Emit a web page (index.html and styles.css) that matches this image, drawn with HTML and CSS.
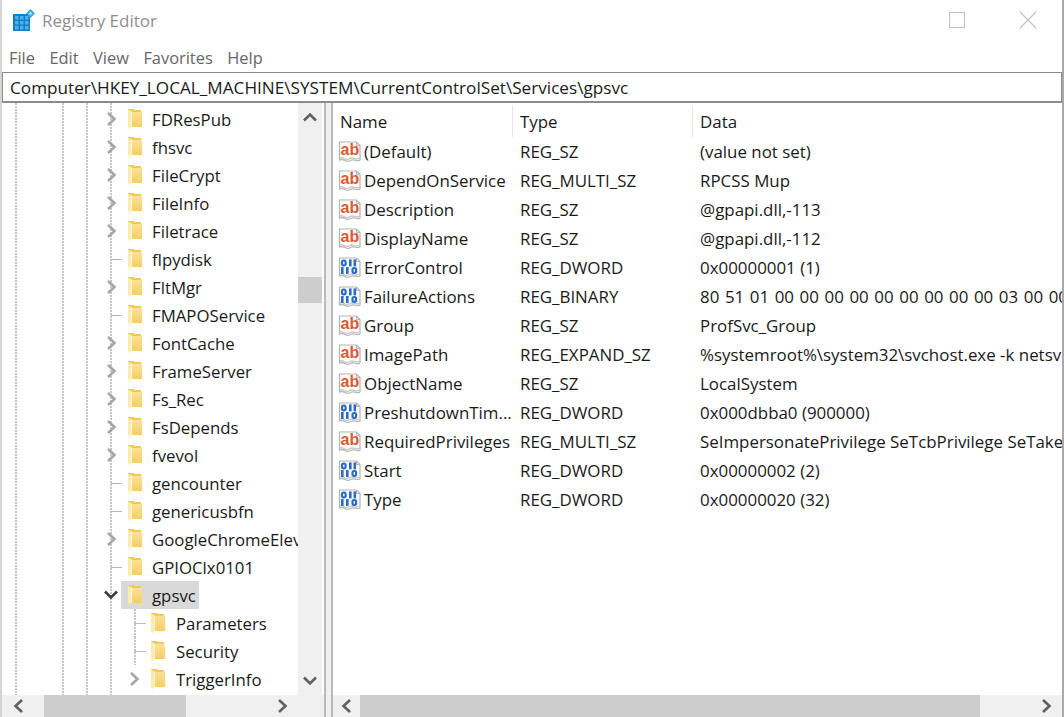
FILE: index.html
```html
<!doctype html>
<html>
    <head>
        <meta charset="utf-8">
        <title>Registry Editor</title>
        <link rel="stylesheet" href="styles.css">
    </head>
    <body>
        <svg class="defs" width="0" height="0">
            <defs>
                <linearGradient id="folder-body" x1="0" y1="0" x2="0" y2="1">
                    <stop offset="0" stop-color="#fbe296"/>
                    <stop offset="1" stop-color="#f6cd68"/>
                </linearGradient>
            </defs>
            <symbol id="folder" viewBox="0 0 16 22">
                <path d="M1 1h6l1 1h6v3H1z" fill="#efc863"/>
                <path d="M5 4h10v15H5z" fill="url(#folder-body)"/>
                <path d="M1 1.500 5 4v15H3.500v2.500L1 19z" fill="#fdeaae"/>
                <path d="M4.500 3.500V19" stroke="#fff6d8" stroke-width="1"/>
            </symbol>
            <symbol id="right" viewBox="0 0 12 14">
                <path d="M2 1 8.500 7 2 13" fill="none" stroke="currentColor" stroke-width="2.600"/>
            </symbol>
            <symbol id="down" viewBox="0 0 14 12">
                <path d="M1 2.500 7 8.500l6-6" fill="none" stroke="currentColor" stroke-width="2.600"/>
            </symbol>
            <symbol id="left" viewBox="0 0 12 14">
                <path d="M10 1 3.500 7l6.500 6" fill="none" stroke="currentColor" stroke-width="2.600"/>
            </symbol>
            <symbol id="up" viewBox="0 0 14 12">
                <path d="M1 9.500 7 3.500l6 6" fill="none" stroke="currentColor" stroke-width="2.600"/>
            </symbol>
            <symbol id="paper" viewBox="0 0 24 24">
                <path d="M1.500 2h17l3.500 3.500V20c-3 2-5-1-8 0s-4 2-6 1-4.500-2-6.500-1z" fill="#fff" stroke="#b3b3b3" stroke-width="1.200"/>
                <path d="M2 18c3-1 4 1 6 1.500s4-1.500 6-1.500 5 2 8 0" fill="none" stroke="#c9c9c9" stroke-width="1.400"/>
                <path d="M18.500 2v3.500H22" fill="none" stroke="#b3b3b3"/>
            </symbol>
            <symbol id="reg-bin" viewBox="0 0 24 24">
                <use href="#paper"/>
                <g fill="none" stroke="#2a6cc8" stroke-width="2.200">
                    <rect x="4" y="4.500" width="3.600" height="4.800" rx="1.600"/>
                    <rect x="14.500" y="12" width="3.600" height="4.800" rx="1.600"/>
                </g>
                <g fill="#2a6cc8">
                    <rect x="11" y="3.400" width="2.600" height="7"/>
                    <rect x="15.500" y="3.400" width="2.600" height="7"/>
                    <rect x="3" y="11" width="2.600" height="7"/>
                    <rect x="8" y="11" width="2.600" height="7"/>
                </g>
            </symbol>
        </svg>

        <div class="window">
            <header class="titlebar">
                <svg class="app-icon" width="24" height="24" viewBox="0 0 24 24">
                    <path d="M1 6h17v17H1z" fill="#0f80c8"/>
                    <path d="M3 8h3.500v3.500H3zM8 8h3.500v3.500H8zM13 8h3.500v3.500H13zM3 13h3.500v3.500H3zM8 13h3.500v3.500H8zM13 13h3.500v3.500H13zM3 18h3.500v3.500H3zM8 18h3.500v3.500H8zM13 18h3.500v3.500H13z" fill="#4cb1ea"/>
                    <path d="M18.500 1 23 5.500 18.500 10 14 5.500z" fill="#3fa3dc"/>
                    <path d="M18.500 3.500 20.500 5.500 18.500 7.500 16.500 5.500z" fill="#a8dcf5"/>
                </svg>
                <span class="title">Registry Editor</span>
                <div class="win-controls">
                    <span class="win-btn"><svg width="16" height="16"><rect x="0.500" y="0.500" width="15" height="15" fill="none" stroke="#c4c4c4" stroke-width="1.300"/></svg></span>
                    <span class="win-btn"><svg width="18" height="18"><path d="M1 1l16 16M17 1 1 17" stroke="#c4c4c4" stroke-width="1.300"/></svg></span>
                </div>
            </header>

            <nav class="menubar">
                <span>File</span>
                <span>Edit</span>
                <span>View</span>
                <span>Favorites</span>
                <span>Help</span>
            </nav>

            <div class="address">Computer\HKEY_LOCAL_MACHINE\SYSTEM\CurrentControlSet\Services\gpsvc</div>

            <main class="panes">
                <section class="tree-pane">
                    <div class="tree-main">
                        <div class="tree">
                            <div class="node"><svg class="chev"><use href="#right"/></svg><svg class="folder"><use href="#folder"/></svg><span>FDResPub</span></div>
                            <div class="node"><svg class="chev"><use href="#right"/></svg><svg class="folder"><use href="#folder"/></svg><span>fhsvc</span></div>
                            <div class="node"><svg class="chev"><use href="#right"/></svg><svg class="folder"><use href="#folder"/></svg><span>FileCrypt</span></div>
                            <div class="node"><svg class="chev"><use href="#right"/></svg><svg class="folder"><use href="#folder"/></svg><span>FileInfo</span></div>
                            <div class="node"><svg class="chev"><use href="#right"/></svg><svg class="folder"><use href="#folder"/></svg><span>Filetrace</span></div>
                            <div class="node"><i class="chev"></i><svg class="folder"><use href="#folder"/></svg><span>flpydisk</span></div>
                            <div class="node"><svg class="chev"><use href="#right"/></svg><svg class="folder"><use href="#folder"/></svg><span>FltMgr</span></div>
                            <div class="node"><i class="chev"></i><svg class="folder"><use href="#folder"/></svg><span>FMAPOService</span></div>
                            <div class="node"><svg class="chev"><use href="#right"/></svg><svg class="folder"><use href="#folder"/></svg><span>FontCache</span></div>
                            <div class="node"><svg class="chev"><use href="#right"/></svg><svg class="folder"><use href="#folder"/></svg><span>FrameServer</span></div>
                            <div class="node"><svg class="chev"><use href="#right"/></svg><svg class="folder"><use href="#folder"/></svg><span>Fs_Rec</span></div>
                            <div class="node"><svg class="chev"><use href="#right"/></svg><svg class="folder"><use href="#folder"/></svg><span>FsDepends</span></div>
                            <div class="node"><svg class="chev"><use href="#right"/></svg><svg class="folder"><use href="#folder"/></svg><span>fvevol</span></div>
                            <div class="node"><i class="chev"></i><svg class="folder"><use href="#folder"/></svg><span>gencounter</span></div>
                            <div class="node"><i class="chev"></i><svg class="folder"><use href="#folder"/></svg><span>genericusbfn</span></div>
                            <div class="node"><svg class="chev"><use href="#right"/></svg><svg class="folder"><use href="#folder"/></svg><span>GoogleChromeElevationService</span></div>
                            <div class="node"><i class="chev"></i><svg class="folder"><use href="#folder"/></svg><span>GPIOClx0101</span></div>
                            <div class="node selected"><svg class="chev open"><use href="#down"/></svg><div class="sel-box"><svg class="folder"><use href="#folder"/></svg><span>gpsvc</span></div></div>
                            <div class="node child branch"><i class="chev"></i><svg class="folder"><use href="#folder"/></svg><span>Parameters</span></div>
                            <div class="node child branch"><i class="chev"></i><svg class="folder"><use href="#folder"/></svg><span>Security</span></div>
                            <div class="node child"><svg class="chev"><use href="#right"/></svg><svg class="folder"><use href="#folder"/></svg><span>TriggerInfo</span></div>
                        </div>
                        <div class="vscroll">
                            <svg class="arrow"><use href="#up"/></svg>
                            <div class="vtrack"><div class="vthumb"></div></div>
                            <svg class="arrow"><use href="#down"/></svg>
                        </div>
                    </div>
                    <div class="hscroll tree-hscroll">
                        <svg class="arrow"><use href="#left"/></svg>
                        <div class="htrack tree-track"><div class="hthumb"></div></div>
                        <svg class="arrow"><use href="#right"/></svg>
                    </div>
                </section>

                <div class="splitter"></div>

                <section class="list-pane">
                    <div class="list">
                        <div class="list-head">
                            <div class="col-name">Name</div>
                            <div class="col-type">Type</div>
                            <div class="col-data">Data</div>
                        </div>
                        <div class="row"><div class="col-name"><svg class="val-icon"><use href="#paper"/><text class="ab" x="2.500" y="15">ab</text></svg>(Default)</div><div class="col-type">REG_SZ</div><div class="col-data">(value not set)</div></div>
                        <div class="row"><div class="col-name"><svg class="val-icon"><use href="#paper"/><text class="ab" x="2.500" y="15">ab</text></svg>DependOnService</div><div class="col-type">REG_MULTI_SZ</div><div class="col-data">RPCSS Mup</div></div>
                        <div class="row"><div class="col-name"><svg class="val-icon"><use href="#paper"/><text class="ab" x="2.500" y="15">ab</text></svg>Description</div><div class="col-type">REG_SZ</div><div class="col-data">@gpapi.dll,-113</div></div>
                        <div class="row"><div class="col-name"><svg class="val-icon"><use href="#paper"/><text class="ab" x="2.500" y="15">ab</text></svg>DisplayName</div><div class="col-type">REG_SZ</div><div class="col-data">@gpapi.dll,-112</div></div>
                        <div class="row"><div class="col-name"><svg class="val-icon"><use href="#reg-bin"/></svg>ErrorControl</div><div class="col-type">REG_DWORD</div><div class="col-data">0x00000001 (1)</div></div>
                        <div class="row"><div class="col-name"><svg class="val-icon"><use href="#reg-bin"/></svg>FailureActions</div><div class="col-type">REG_BINARY</div><div class="col-data hex">80 51 01 00 00 00 00 00 00 00 00 00 03 00 00 00</div></div>
                        <div class="row"><div class="col-name"><svg class="val-icon"><use href="#paper"/><text class="ab" x="2.500" y="15">ab</text></svg>Group</div><div class="col-type">REG_SZ</div><div class="col-data">ProfSvc_Group</div></div>
                        <div class="row"><div class="col-name"><svg class="val-icon"><use href="#paper"/><text class="ab" x="2.500" y="15">ab</text></svg>ImagePath</div><div class="col-type">REG_EXPAND_SZ</div><div class="col-data">%systemroot%\system32\svchost.exe -k netsvcs -p</div></div>
                        <div class="row"><div class="col-name"><svg class="val-icon"><use href="#paper"/><text class="ab" x="2.500" y="15">ab</text></svg>ObjectName</div><div class="col-type">REG_SZ</div><div class="col-data">LocalSystem</div></div>
                        <div class="row"><div class="col-name"><svg class="val-icon"><use href="#reg-bin"/></svg>PreshutdownTim...</div><div class="col-type">REG_DWORD</div><div class="col-data">0x000dbba0 (900000)</div></div>
                        <div class="row"><div class="col-name"><svg class="val-icon"><use href="#paper"/><text class="ab" x="2.500" y="15">ab</text></svg>RequiredPrivileges</div><div class="col-type">REG_MULTI_SZ</div><div class="col-data">SeImpersonatePrivilege SeTcbPrivilege SeTakeOwnershipPrivilege</div></div>
                        <div class="row"><div class="col-name"><svg class="val-icon"><use href="#reg-bin"/></svg>Start</div><div class="col-type">REG_DWORD</div><div class="col-data">0x00000002 (2)</div></div>
                        <div class="row"><div class="col-name"><svg class="val-icon"><use href="#reg-bin"/></svg>Type</div><div class="col-type">REG_DWORD</div><div class="col-data">0x00000020 (32)</div></div>
                    </div>
                    <div class="hscroll list-hscroll">
                        <svg class="arrow"><use href="#left"/></svg>
                        <div class="htrack list-track"><div class="hthumb"></div></div>
                        <svg class="arrow"><use href="#right"/></svg>
                    </div>
                </section>
            </main>
        </div>
    </body>
</html>
```

FILE: styles.css
```css
html,
body {
    margin: 0;
    height: 100%;
}
body {
    font-family: "Open Sans", "Noto Sans", sans-serif;
    font-size: 16.900px;
    color: #1a1a1a;
    background: #fff;
    overflow: hidden;
}
.defs {
    display: block;
    height: 0;
}
.window {
    height: 717px;
    width: 1064px;
    box-sizing: border-box;
    display: flex;
    flex-direction: column;
    border-left: 2px solid #d4d4d4;
    border-right: 2px solid #a9a9a9;
    overflow: hidden;
}
.titlebar {
    height: 44px;
    flex: none;
    display: flex;
    align-items: center;
    padding-left: 10px;
}
.app-icon {
    margin-right: 6px;
    margin-top: -4px;
}
.title {
    color: #8f8f8f;
    font-size: 17px;
    margin-top: -3px;
}
.win-controls {
    margin-left: auto;
    display: flex;
    align-items: center;
    gap: 3px;
    margin-top: -4px;
}
.win-btn {
    display: flex;
    width: 68px;
    justify-content: center;
}
.win-btn svg {
    display: block;
}
.menubar {
    height: 26px;
    padding-bottom: 2px;
    flex: none;
    display: flex;
    align-items: center;
    gap: 14.500px;
    padding-left: 7px;
    color: #666;
    font-size: 16.400px;
}
.address {
    height: 31px;
    flex: none;
    box-sizing: border-box;
    border: 2px solid #8c8c8c;
    border-width: 1px 1px 2px 1px;
    padding-left: 7px;
    line-height: 29px;
    font-size: 17.170px;
    white-space: nowrap;
    overflow: hidden;
}
.panes {
    flex: 1;
    min-height: 0;
    display: flex;
}
.tree-pane {
    width: 322px;
    flex: none;
    display: flex;
    flex-direction: column;
}
.tree-main {
    flex: 1;
    min-height: 0;
    display: flex;
}
.tree {
    flex: 1;
    min-width: 0;
    overflow: hidden;
    padding-top: 2px;
    font-size: 16.800px;
    /* dotted guide lines of the parent levels */
    background-image:
        repeating-linear-gradient(#c6c6c6 0 2px, transparent 2px 3px),
        repeating-linear-gradient(#c6c6c6 0 2px, transparent 2px 3px),
        repeating-linear-gradient(#c6c6c6 0 2px, transparent 2px 3px),
        repeating-linear-gradient(#c6c6c6 0 2px, transparent 2px 3px);
    background-size: 2px 100%;
    background-repeat: no-repeat;
    background-position: 13px 0, 60px 0, 84px 0, 108px 0;
}
.node {
    height: 28px;
    display: flex;
    align-items: center;
    white-space: nowrap;
    padding-left: 104px;
}
.node.child {
    padding-left: 127px;
}
.node.child .folder {
    margin-right: 10px;
}
.node.branch {
    background-image:
        repeating-linear-gradient(#c6c6c6 0 2px, transparent 2px 3px),
        linear-gradient(#bdbdbd, #bdbdbd);
    background-size: 2px 100%, 12px 1px;
    background-position: 132px 0, 132px 14px;
    background-repeat: no-repeat;
}
.chev {
    width: 12px;
    height: 14px;
    flex: none;
    color: #a6a6a6;
    margin-right: 9px;
}
.chev.open {
    width: 14px;
    height: 12px;
    margin-left: -2px;
    margin-right: 9px;
    color: #3c3c3c;
}
i.chev {
    display: block;
    width: 17px;
    margin-right: 4px;
    background: linear-gradient(#b5b5b5, #b5b5b5) no-repeat 5px 50% / 11px 1px;
}
.child i.chev {
    background: none;
}
.folder {
    width: 16px;
    height: 22px;
    flex: none;
    margin-right: 9px;
}
.sel-box {
    display: flex;
    align-items: center;
    height: 28px;
    background: #d9d9d9;
    margin-left: -6px;
    padding: 0 3px 0 6px;
}
.arrow {
    flex: none;
    width: 12px;
    height: 14px;
    color: #606060;
}
.vscroll {
    width: 24px;
    flex: none;
    margin-right: 2px;
    background: #f0f0f0;
    display: flex;
    flex-direction: column;
    align-items: center;
    padding: 8px 0;
    box-sizing: border-box;
}
.vscroll .arrow {
    width: 14px;
    height: 12px;
}
.vtrack {
    flex: 1;
    align-self: stretch;
    padding-top: 154px;
}
.vthumb {
    height: 26px;
    background: #cdcdcd;
}
.hscroll {
    height: 22px;
    flex: none;
    background: #f0f0f0;
    display: flex;
    align-items: center;
}
.tree-hscroll {
    padding: 0 35px 0 10px;
}
.list-hscroll {
    padding: 0 9px 0 7px;
}
.htrack {
    flex: 1;
    align-self: stretch;
}
.hthumb {
    height: 100%;
    background: #cdcdcd;
}
.tree-track {
    padding: 0 91px 0 20px;
}
.list-track {
    padding: 0 61px 0 8px;
}
.splitter {
    width: 9px;
    flex: none;
    box-sizing: border-box;
    background: #f0f0f0;
    border-left: 2px solid #b9b9b9;
    border-right: 2px solid #b9b9b9;
}
.list-pane {
    flex: 1;
    min-width: 0;
    display: flex;
    flex-direction: column;
}
.list {
    flex: 1;
    min-height: 0;
    overflow: hidden;
}
.list-head,
.row {
    display: flex;
    white-space: nowrap;
}
.list-head {
    height: 34px;
    box-sizing: border-box;
    padding-top: 3px;
    line-height: 31px;
}
.row {
    height: 29px;
    line-height: 29px;
}
.col-name {
    width: 180px;
    flex: none;
    box-sizing: border-box;
    padding-left: 7px;
    display: flex;
    align-items: center;
}
.col-type {
    width: 180px;
    flex: none;
    box-sizing: border-box;
    padding-left: 7px;
}
.col-data {
    flex: 1;
    padding-left: 7px;
}
.col-data.hex {
    word-spacing: 1.200px;
}
.list-head .col-name,
.list-head .col-type {
    border-right: 1px solid #e5e5e5;
}
.row .col-name {
    padding-left: 5px;
}
.val-icon {
    width: 24px;
    height: 24px;
    flex: none;
    margin-right: 2px;
}
.ab {
    font-family: "Liberation Sans", sans-serif;
    font-size: 16px;
    font-weight: 700;
    fill: #e2572f;
}
```
